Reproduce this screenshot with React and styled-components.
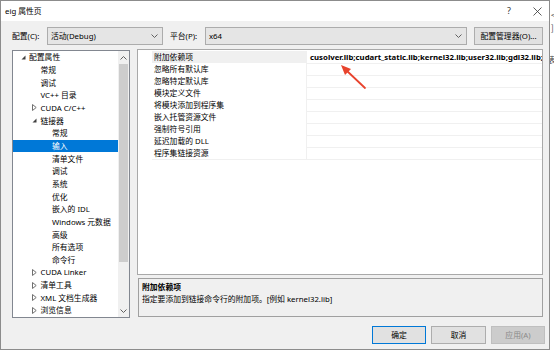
import React from 'react'
import styled, { createGlobalStyle } from 'styled-components'

const GlobalStyle = createGlobalStyle`
	html, body {
		margin: 0;
		padding: 0;
		background: #ffffff;
	}
	body {
		font-family: "Noto Sans", "Noto Sans CJK SC", sans-serif;
		font-size: 7.8px;
		color: #000;
	}
`

const treeItems = [
	{ label: '配置属性', level: 0, arrow: 'open' },
	{ label: '常规', level: 1 },
	{ label: '调试', level: 1 },
	{ label: 'VC++ 目录', level: 1 },
	{ label: 'CUDA C/C++', level: 1, arrow: 'closed' },
	{ label: '链接器', level: 1, arrow: 'open' },
	{ label: '常规', level: 2 },
	{ label: '输入', level: 2, selected: true },
	{ label: '清单文件', level: 2 },
	{ label: '调试', level: 2 },
	{ label: '系统', level: 2 },
	{ label: '优化', level: 2 },
	{ label: '嵌入的 IDL', level: 2 },
	{ label: 'Windows 元数据', level: 2 },
	{ label: '高级', level: 2 },
	{ label: '所有选项', level: 2 },
	{ label: '命令行', level: 2 },
	{ label: 'CUDA Linker', level: 1, arrow: 'closed' },
	{ label: '清单工具', level: 1, arrow: 'closed' },
	{ label: 'XML 文档生成器', level: 1, arrow: 'closed' },
	{ label: '浏览信息', level: 1, arrow: 'closed' },
]

const props = [
	{ name: '附加依赖项', value: 'cusolver.lib;cudart_static.lib;kernel32.lib;user32.lib;gdi32.lib;' },
	{ name: '忽略所有默认库' },
	{ name: '忽略特定默认库' },
	{ name: '模块定义文件' },
	{ name: '将模块添加到程序集' },
	{ name: '嵌入托管资源文件' },
	{ name: '强制符号引用' },
	{ name: '延迟加载的 DLL' },
	{ name: '程序集链接资源' },
]

const Chevron = ({ up }) => (
	<svg width="7" height="4" viewBox="0 0 7 4">
		<polyline
			points={up ? '0.5,3.5 3.5,0.5 6.5,3.5' : '0.5,0.5 3.5,3.5 6.5,0.5'}
			fill="none"
			stroke="#606060"
			strokeWidth="1"
		/>
	</svg>
)

const TreeArrow = ({ type }) => {
	if (type === 'open') {
		return (
			<svg width="5" height="5" viewBox="0 0 5 5">
				<polygon points="4.5,0.5 4.5,4.5 0.5,4.5" fill="#404040" />
			</svg>
		)
	}
	return (
		<svg width="5" height="7" viewBox="0 0 5 7">
			<polygon points="0.5,0.5 4.2,3.5 0.5,6.5" fill="none" stroke="#707070" strokeWidth="1" />
		</svg>
	)
}

const App = () => {
	return (
		<>
			<GlobalStyle />
			<Page>
				<Dialog>
					<TitleBar>
						<Title>eig 属性页</Title>
						<TitleButtons>
							<TitleGlyph>?</TitleGlyph>
							<TitleGlyph>
								<svg width="9" height="9" viewBox="0 0 9 9">
									<path d="M0.5 0.5 L8.5 8.5 M8.5 0.5 L0.5 8.5" stroke="#333" strokeWidth="0.8" />
								</svg>
							</TitleGlyph>
						</TitleButtons>
					</TitleBar>

					<ConfigRow>
						<Label>配置(C):</Label>
						<Combo width="116px">
							<span>活动(Debug)</span>
							<Chevron />
						</Combo>
						<Label $ml="7px">平台(P):</Label>
						<Combo width="262px">
							<span>x64</span>
							<Chevron />
						</Combo>
						<Button width="69px" $ml="7px">配置管理器(O)...</Button>
					</ConfigRow>

					<Main>
						<Tree>
							<TreeList>
								{treeItems.map((item, i) => (
									<TreeRow key={i} $selected={item.selected}>
										<TreeText $level={item.level}>
											{item.arrow && (
												<ArrowSlot>
													<TreeArrow type={item.arrow} />
												</ArrowSlot>
											)}
											{item.label}
										</TreeText>
									</TreeRow>
								))}
							</TreeList>
							<ScrollBar>
								<ScrollArrow><Chevron up /></ScrollArrow>
								<Track>
									<Thumb />
								</Track>
								<ScrollArrow><Chevron /></ScrollArrow>
							</ScrollBar>
						</Tree>

						<RightColumn>
							<Grid>
								{props.map((p, i) => (
									<GridRow key={i}>
										<Gutter />
										<NameCell $active={i === 0}>{p.name}</NameCell>
										<ValueCell>{p.value}</ValueCell>
									</GridRow>
								))}
								<GridFill />
								<Annotation width="30" height="28" viewBox="0 0 30 28">
									<line x1="26" y1="25" x2="7" y2="7" stroke="#e8432d" strokeWidth="1.8" strokeLinecap="round" />
									<polygon points="2,2 12,6 6,12" fill="#e8432d" />
								</Annotation>
							</Grid>
							<Description>
								<DescTitle>附加依赖项</DescTitle>
								<DescText>指定要添加到链接命令行的附加项。[例如 kernel32.lib]</DescText>
							</Description>
						</RightColumn>
					</Main>

					<Footer>
						<Button width="54px" $primary>确定</Button>
						<Button width="55px" $ml="5px">取消</Button>
						<Button width="54px" $ml="5px" $disabled>应用(A)</Button>
					</Footer>
				</Dialog>
				<Behind>
					<BehindText $top="10px">&lt;</BehindText>
					<BehindText $top="3px">]</BehindText>
					<BehindText $top="22px" $shift="-2px">表</BehindText>
				</Behind>
			</Page>
		</>
	)
}

const Page = styled.div`
	display: flex;
	width: 554px;
	height: 355px;
	overflow: hidden;
	background: #fff;
`

const Dialog = styled.div`
	flex: 0 0 550px;
	height: 350px;
	box-sizing: border-box;
	border: 1px solid #8c8c8c;
	background: #f0f0f0;
	display: flex;
	flex-direction: column;
`

const TitleBar = styled.div`
	height: 20px;
	background: #ffffff;
	display: flex;
	align-items: center;
	justify-content: space-between;
	padding: 0 7px 0 4px;
`

const Title = styled.div`
	font-size: 7.8px;
	line-height: 10px;
`

const TitleButtons = styled.div`
	display: flex;
	align-items: center;
	gap: 22px;
`

const TitleGlyph = styled.div`
	display: flex;
	align-items: center;
	font-size: 9px;
	color: #333;
	line-height: 10px;
`

const ConfigRow = styled.div`
	display: flex;
	align-items: center;
	height: 18px;
	margin-top: 6px;
	padding-left: 11px;
`

const Label = styled.div`
	line-height: 10px;
	width: 35px;
	margin-left: ${p => p.$ml || '0'};
	white-space: nowrap;
`

const Combo = styled.div`
	box-sizing: border-box;
	width: ${p => p.width};
	height: 18px;
	background: #e5e5e5;
	border: 1px solid #acacac;
	display: flex;
	align-items: center;
	justify-content: space-between;
	padding: 0 4px 0 3px;
	line-height: 10px;
`

const Button = styled.div`
	box-sizing: border-box;
	width: ${p => p.width};
	height: 18px;
	margin-left: ${p => p.$ml || '0'};
	display: flex;
	align-items: center;
	justify-content: center;
	line-height: 10px;
	white-space: nowrap;
	background: ${p => (p.$disabled ? '#cccccc' : '#e1e1e1')};
	color: ${p => (p.$disabled ? '#8a8a8a' : '#000')};
	border: 1px solid ${p => (p.$primary ? '#0078d7' : p.$disabled ? '#bfbfbf' : '#adadad')};
`

const Main = styled.div`
	display: flex;
	margin-top: 4px;
	padding-left: 11px;
	gap: 7px;
	height: 268px;
`

const Tree = styled.div`
	box-sizing: border-box;
	width: 118px;
	height: 268px;
	margin-top: 1px;
	background: #ffffff;
	border: 1px solid #828790;
	display: flex;
	overflow: hidden;
`

const TreeList = styled.div`
	flex: 1;
	display: flex;
	flex-direction: column;
`

const TreeRow = styled.div`
	height: 12.66px;
	flex: 0 0 12.66px;
	display: flex;
	align-items: center;
	background: ${p => (p.$selected ? '#0078d7' : 'transparent')};
	color: ${p => (p.$selected ? '#fff' : '#000')};
`

const TreeText = styled.div`
	position: relative;
	margin-left: ${p => 16 + p.$level * 11.5}px;
	line-height: 10px;
	white-space: nowrap;
`

const ArrowSlot = styled.span`
	position: absolute;
	left: -9px;
	top: 1px;
	width: 6px;
	height: 8px;
	display: flex;
	align-items: center;
	justify-content: center;
`

const ScrollBar = styled.div`
	width: 11px;
	flex: 0 0 11px;
	background: #f0f0f0;
	display: flex;
	flex-direction: column;
`

const ScrollArrow = styled.div`
	height: 13px;
	flex: 0 0 13px;
	display: flex;
	align-items: center;
	justify-content: center;
`

const Track = styled.div`
	flex: 1;
	padding: 0 1px;
`

const Thumb = styled.div`
	height: 198px;
	background: #cdcdcd;
`

const RightColumn = styled.div`
	width: 406px;
	display: flex;
	flex-direction: column;
	gap: 3px;
`

const Grid = styled.div`
	position: relative;
	box-sizing: border-box;
	height: 227px;
	padding-top: 1px;
	background: #ffffff;
	border: 1px solid #a9a9a9;
	display: flex;
	flex-direction: column;
`

const GridRow = styled.div`
	display: grid;
	grid-template-columns: 14px 155px 1fr;
	height: 12px;
	flex: 0 0 12px;
`

const Gutter = styled.div`
	background: #ffffff;
`

const NameCell = styled.div`
	box-sizing: border-box;
	padding-left: 2px;
	line-height: 12px;
	white-space: nowrap;
	background: ${p => (p.$active ? '#f0f0f0' : '#fff')};
	border-bottom: 1px solid #f0f0f0;
	border-right: 1px solid #f0f0f0;
`

const ValueCell = styled.div`
	box-sizing: border-box;
	padding-left: 3px;
	line-height: 12px;
	font-weight: 700;
	white-space: nowrap;
	overflow: hidden;
	border-bottom: 1px solid #f0f0f0;
`

const GridFill = styled.div`
	flex: 1;
`

const Annotation = styled.svg`
	position: absolute;
	left: 201px;
	top: 13px;
`

const Description = styled.div`
	box-sizing: border-box;
	height: 39px;
	margin-left: 1px;
	border: 1px solid #a0a0a0;
	padding: 2px 3px;
	display: flex;
	flex-direction: column;
`

const DescTitle = styled.div`
	font-weight: 700;
	line-height: 12px;
`

const DescText = styled.div`
	line-height: 12px;
`

const Footer = styled.div`
	display: flex;
	justify-content: flex-end;
	margin-top: 9px;
	padding-right: 4px;
`

const Behind = styled.div`
	flex: 1;
	display: flex;
	flex-direction: column;
	overflow: hidden;
	font-family: "Noto Sans CJK SC", sans-serif;
	font-size: 8px;
	color: #444;
`

const BehindText = styled.div`
	margin-top: ${p => p.$top};
	margin-left: ${p => p.$shift || '1px'};
	line-height: 10px;
	white-space: nowrap;
`

export default App
